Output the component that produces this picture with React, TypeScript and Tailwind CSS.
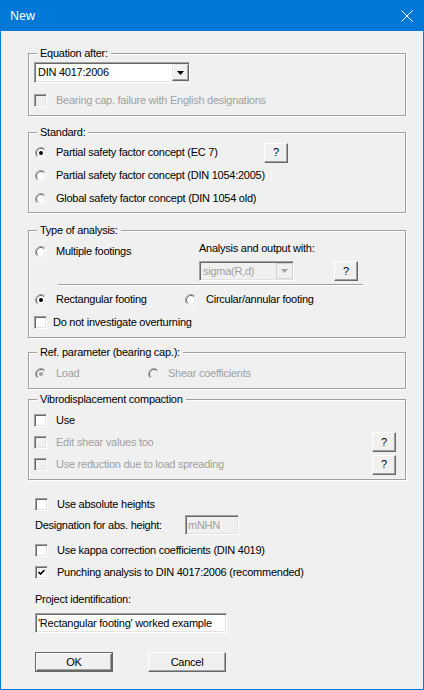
import React from 'react';

const font = { fontFamily: '"Liberation Sans", Arial, sans-serif' };

function Radio({ on = false, disabled = false }: { on?: boolean; disabled?: boolean }) {
  return (
    <svg width="12" height="12" viewBox="0 0 12 12" className="shrink-0">
      <circle cx="6" cy="6" r="5.5" fill={disabled ? '#f0f0f0' : '#ffffff'} />
      <path d="M9.9 2.1 A5.5 5.5 0 0 0 2.1 9.9" fill="none" stroke="#a0a0a0" strokeWidth="1" />
      <path d="M9.2 2.8 A4.5 4.5 0 0 0 2.8 9.2" fill="none" stroke="#696969" strokeWidth="1" />
      <path d="M9.9 2.1 A5.5 5.5 0 0 1 2.1 9.9" fill="none" stroke="#ffffff" strokeWidth="1" />
      <path d="M9.2 2.8 A4.5 4.5 0 0 1 2.8 9.2" fill="none" stroke="#e3e3e3" strokeWidth="1" />
      {on && <circle cx="6" cy="6" r="2" fill={disabled ? '#a0a0a0' : '#000000'} />}
    </svg>
  );
}

function Box({ on = false, disabled = false }: { on?: boolean; disabled?: boolean }) {
  return (
    <div
      className={`w-[13px] h-[13px] shrink-0 border border-t-[#a0a0a0] border-l-[#a0a0a0] border-b-white border-r-white shadow-[inset_1px_1px_0_#696969,inset_-1px_-1px_0_#e3e3e3] flex items-center justify-center ${disabled ? 'bg-[#f0f0f0]' : 'bg-white'}`}
    >
      {on && (
        <svg width="9" height="9" viewBox="0 0 9 9">
          <path d="M1.5 4 L3.5 6 L7.5 2" fill="none" stroke="#000" strokeWidth="1.7" />
        </svg>
      )}
    </div>
  );
}

function Btn({ children, w, isDefault = false }: { children: React.ReactNode; w: string; isDefault?: boolean }) {
  return (
    <div className={`${w} h-[20px] shrink-0 ${isDefault ? 'border border-[#696969]' : ''}`}>
      <div className="w-full h-full bg-[#f0f0f0] border border-t-white border-l-white border-b-[#696969] border-r-[#696969] shadow-[inset_-1px_-1px_0_#a0a0a0] flex items-center justify-center text-[11px] text-black">
        {children}
      </div>
    </div>
  );
}

function Sunken({ w, h = 'h-[20px]', disabled = false, children }: { w: string; h?: string; disabled?: boolean; children?: React.ReactNode }) {
  return (
    <div
      className={`${w} ${h} shrink-0 border border-t-[#a0a0a0] border-l-[#a0a0a0] border-b-white border-r-white shadow-[inset_1px_1px_0_#696969,inset_-1px_-1px_0_#e3e3e3] flex items-center ${disabled ? 'bg-[#f0f0f0] text-[#a0a0a0]' : 'bg-white text-black'}`}
    >
      {children}
    </div>
  );
}

function Group({ title, h, mt, children }: { title: string; h: string; mt: string; children: React.ReactNode }) {
  return (
    <div className={`relative w-[378px] ${h} ${mt} border border-[#a0a0a0] shadow-[inset_1px_1px_0_white,1px_1px_0_white]`}>
      <div className="absolute left-[8px] top-[-8px] px-[3px] bg-[#f0f0f0] text-[11px] leading-[14px] text-black">{title}</div>
      {children}
    </div>
  );
}

export default function App() {
  const grey = 'text-[#a0a0a0]';
  return (
    <div style={font} className="w-[424px] h-[690px] border border-[#0078d7] bg-[#f0f0f0] flex flex-col text-[11px] tracking-[-0.25px] text-black">
      {/* title bar */}
      <div className="h-[30px] bg-[#0078d7] flex items-center justify-between pl-[9px] pr-[10px]">
        <span className="text-white text-[12px] tracking-normal" style={{ fontFamily: '"Noto Sans", "Open Sans", sans-serif' }}>New</span>
        <svg width="12" height="12" viewBox="0 0 12 12">
          <path d="M0.5 0.5 L11.5 11.5 M11.5 0.5 L0.5 11.5" stroke="#ffffff" strokeWidth="1" />
        </svg>
      </div>

      <div className="flex flex-col pl-[27px]">
        {/* Equation after */}
        <Group title="Equation after:" h="h-[63px]" mt="mt-[22px]">
          <div className="flex flex-col pl-[5px] pt-[8px]">
            <Sunken w="w-[156px]" h="h-[21px]">
              <span className="flex-1 pl-[3px]">DIN 4017:2006</span>
              <div className="w-[17px] h-[17px] bg-[#f0f0f0] border border-t-[#e3e3e3] border-l-[#e3e3e3] border-b-[#696969] border-r-[#696969] shadow-[inset_-1px_-1px_0_#a0a0a0,inset_1px_1px_0_white] flex items-center justify-center">
                <svg width="7" height="4" viewBox="0 0 7 4"><path d="M0 0 H7 L3.5 4 Z" fill="#000" /></svg>
              </div>
            </Sunken>
            <div className="flex items-center h-[13px] mt-[11px]">
              <Box disabled />
              <span className={`ml-[9px] ${grey}`}>Bearing cap. failure with English designations</span>
            </div>
          </div>
        </Group>

        {/* Standard */}
        <Group title="Standard:" h="h-[81px]" mt="mt-[16px]">
          <div className="flex flex-col pl-[6px] pt-[8px]">
            <div className="flex items-center h-[23px]">
              <div className="flex items-center w-[229px]">
                <Radio on />
                <span className="ml-[9px]">Partial safety factor concept (EC 7)</span>
              </div>
              <Btn w="w-[24px]">?</Btn>
            </div>
            <div className="flex items-center h-[23px]">
              <Radio />
              <span className="ml-[9px]">Partial safety factor concept (DIN 1054:2005)</span>
            </div>
            <div className="flex items-center h-[23px]">
              <Radio />
              <span className="ml-[9px]">Global safety factor concept (DIN 1054 old)</span>
            </div>
          </div>
        </Group>

        {/* Type of analysis */}
        <Group title="Type of analysis:" h="h-[108px]" mt="mt-[17px]">
          <div className="flex flex-col pl-[6px] pt-[9px]">
            <div className="flex h-[41px]">
              <div className="flex items-center h-[23px] w-[164px] self-start">
                <Radio />
                <span className="ml-[9px]">Multiple footings</span>
              </div>
              <div className="flex flex-col">
                <div className="h-[13px] leading-[13px] mt-[2px]">Analysis and output with:</div>
                <div className="flex mt-[6px]">
                  <Sunken w="w-[95px]" disabled>
                    <span className="flex-1 pl-[3px]">sigma(R,d)</span>
                    <div className="w-[17px] h-[16px] bg-[#f0f0f0] border border-[#d4d4d4] flex items-center justify-center">
                      <svg width="7" height="4" viewBox="0 0 7 4"><path d="M0 0 H7 L3.5 4 Z" fill="#a0a0a0" /></svg>
                    </div>
                  </Sunken>
                  <div className="ml-[40px]">
                    <Btn w="w-[24px]">?</Btn>
                  </div>
                </div>
              </div>
            </div>
            <div className="ml-[23px] mt-[3px] w-[305px] h-[2px] border-t border-t-[#a0a0a0] border-b border-b-white" />
            <div className="flex items-center h-[23px] mt-[2px]">
              <div className="flex items-center w-[150px]">
                <Radio on />
                <span className="ml-[9px]">Rectangular footing</span>
              </div>
              <Radio />
              <span className="ml-[9px]">Circular/annular footing</span>
            </div>
            <div className="flex items-center h-[23px] -ml-[1px]">
              <Box />
              <span className="ml-[6px]">Do not investigate overturning</span>
            </div>
          </div>
        </Group>

        {/* Ref. parameter */}
        <Group title="Ref. parameter (bearing cap.):" h="h-[37px]" mt="mt-[14px]">
          <div className="flex items-center h-[23px] pl-[6px] mt-[9px]">
            <div className="flex items-center w-[113px]">
              <Radio on disabled />
              <span className={`ml-[9px] ${grey}`}>Load</span>
            </div>
            <Radio disabled />
            <span className={`ml-[8px] ${grey}`}>Shear coefficients</span>
          </div>
        </Group>

        {/* Vibrodisplacement */}
        <Group title="Vibrodisplacement compaction" h="h-[81px]" mt="mt-[10px]">
          <div className="flex flex-col pl-[5px] pr-[9px] pt-[9px]">
            <div className="flex items-center h-[22px]">
              <Box />
              <span className="ml-[9px]">Use</span>
            </div>
            <div className="flex items-center h-[22px]">
              <Box disabled />
              <span className={`ml-[9px] ${grey}`}>Edit shear values too</span>
              <div className="ml-auto">
                <Btn w="w-[24px]">?</Btn>
              </div>
            </div>
            <div className="flex items-center h-[23px]">
              <Box disabled />
              <span className={`ml-[9px] ${grey}`}>Use reduction due to load spreading</span>
              <div className="ml-auto">
                <Btn w="w-[24px]">?</Btn>
              </div>
            </div>
          </div>
        </Group>

        {/* lower options */}
        <div className="flex flex-col pl-[7px]">
          <div className="flex items-center h-[22px] mt-[13px]">
            <Box />
            <span className="ml-[9px]">Use absolute heights</span>
          </div>
          <div className="flex items-center h-[20px]">
            <span className="w-[150px]">Designation for abs. height:</span>
            <Sunken w="w-[54px]" h="h-[20px]" disabled>
              <span className="pl-[2px]">mNHN</span>
            </Sunken>
          </div>
          <div className="flex items-center h-[22px] mt-[4px]">
            <Box />
            <span className="ml-[9px]">Use kappa correction coefficients (DIN 4019)</span>
          </div>
          <div className="flex items-center h-[22px]">
            <Box on />
            <span className="ml-[9px]">Punching analysis to DIN 4017:2006 (recommended)</span>
          </div>
          <div className="h-[13px] leading-[13px] mt-[10px]">Project identification:</div>
          <div className="mt-[7px]">
            <Sunken w="w-[192px]" h="h-[20px]">
              <span className="pl-[2px]">'Rectangular footing' worked example</span>
            </Sunken>
          </div>
          <div className="flex mt-[19px]">
            <Btn w="w-[78px]" isDefault>OK</Btn>
            <div className="ml-[35px]">
              <Btn w="w-[78px]">Cancel</Btn>
            </div>
          </div>
        </div>
      </div>
    </div>
  );
}
